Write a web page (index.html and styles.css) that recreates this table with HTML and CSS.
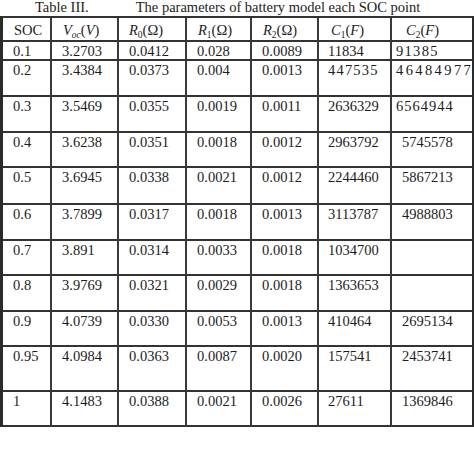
FILE: index.html
```html
<!DOCTYPE html>
<html>
<head>
<meta charset="utf-8">
<link rel="stylesheet" href="styles.css">
</head>
<body>
<div class="title"><span class="t1">Table III.</span><span class="t2">The parameters of battery model each SOC point</span></div>
<div class="tbl">
  <div class="c h c1">SOC</div>
  <div class="c h c2"><i>V</i><sub><i>oc</i></sub>(<i>V</i>)</div>
  <div class="c h c3"><i>R</i><sub>0</sub>(Ω)</div>
  <div class="c h c4"><i>R</i><sub>1</sub>(Ω)</div>
  <div class="c h c5"><i>R</i><sub>2</sub>(Ω)</div>
  <div class="c h c6"><i>C</i><sub>1</sub>(<i>F</i>)</div>
  <div class="c h c7"><i>C</i><sub>2</sub>(<i>F</i>)</div>

  <div class="c c1">0.1</div><div class="c c2">3.2703</div><div class="c c3">0.0412</div><div class="c c4">0.028</div><div class="c c5">0.0089</div><div class="c c6">11834</div><div class="c c7 s1">91385</div>
  <div class="c c1">0.2</div><div class="c c2">3.4384</div><div class="c c3">0.0373</div><div class="c c4">0.004</div><div class="c c5">0.0013</div><div class="c c6 w1">447535</div><div class="c c7 s2">46484977</div>
  <div class="c c1">0.3</div><div class="c c2">3.5469</div><div class="c c3">0.0355</div><div class="c c4">0.0019</div><div class="c c5">0.0011</div><div class="c c6">2636329</div><div class="c c7 s3">6564944</div>
  <div class="c c1">0.4</div><div class="c c2">3.6238</div><div class="c c3">0.0351</div><div class="c c4">0.0018</div><div class="c c5">0.0012</div><div class="c c6">2963792</div><div class="c c7">5745578</div>
  <div class="c c1">0.5</div><div class="c c2">3.6945</div><div class="c c3">0.0338</div><div class="c c4">0.0021</div><div class="c c5">0.0012</div><div class="c c6">2244460</div><div class="c c7">5867213</div>
  <div class="c c1">0.6</div><div class="c c2">3.7899</div><div class="c c3">0.0317</div><div class="c c4">0.0018</div><div class="c c5">0.0013</div><div class="c c6">3113787</div><div class="c c7">4988803</div>
  <div class="c c1">0.7</div><div class="c c2">3.891</div><div class="c c3">0.0314</div><div class="c c4">0.0033</div><div class="c c5">0.0018</div><div class="c c6">1034700</div><div class="c c7"></div>
  <div class="c c1">0.8</div><div class="c c2">3.9769</div><div class="c c3">0.0321</div><div class="c c4">0.0029</div><div class="c c5">0.0018</div><div class="c c6">1363653</div><div class="c c7"></div>
  <div class="c c1">0.9</div><div class="c c2">4.0739</div><div class="c c3">0.0330</div><div class="c c4">0.0053</div><div class="c c5">0.0013</div><div class="c c6">410464</div><div class="c c7">2695134</div>
  <div class="c c1">0.95</div><div class="c c2">4.0984</div><div class="c c3">0.0363</div><div class="c c4">0.0087</div><div class="c c5">0.0020</div><div class="c c6">157541</div><div class="c c7">2453741</div>
  <div class="c c1">1</div><div class="c c2">4.1483</div><div class="c c3">0.0388</div><div class="c c4">0.0021</div><div class="c c5">0.0026</div><div class="c c6">27611</div><div class="c c7">1369846</div>
</div>
</body>
</html>
```
FILE: styles.css
```css
html, body {
  margin: 0;
  padding: 0;
  background: #fff;
}
body {
  font-family: "Liberation Serif", "Times New Roman", serif;
  font-size: 14.5px;
  color: #1c1c1c;
  width: 474px;
  height: 449px;
  overflow: hidden;
}
.title {
  height: 16px;
  line-height: 14px;
  display: flex;
  white-space: nowrap;
}
.t1 { margin-left: 35px; }
.t2 { margin-left: 47px; }

.tbl {
  display: grid;
  box-sizing: border-box;
  width: 474px;
  grid-template-columns: 49px 67px 68px 65px 67px 73px 80px;
  grid-template-rows: 24px 19px 36px 36px 35px 37px 36px 35px 36px 35px 45px 35px;
  border-left: 3px solid #2a2a2a;
  border-right: 2px solid #2a2a2a;
  border-top: 2px solid #333;
}
.c {
  box-sizing: border-box;
  border-right: 2px solid #3a3a3a;
  border-bottom: 2px solid #333;
  line-height: 16px;
  padding-top: 1px;
  padding-left: 10px;
  white-space: nowrap;
  overflow: visible;
}
.c1 { padding-left: 10px; }
.c7 { border-right: none; padding-left: 10px; }
.h { padding-top: 4px; padding-left: 11px; }
.h.c3 { padding-left: 10px; }
.h.c7 { padding-left: 14px; }
.c6 { padding-left: 9px; }
.h.c6 { padding-left: 12px; }
.s1 { padding-left: 4px; letter-spacing: 1.3px; }
.s2 { padding-left: 4px; letter-spacing: 2.4px; }
.s3 { padding-left: 4px; letter-spacing: 1px; }
.w1 { letter-spacing: 1.2px; }
sub {
  font-size: 9.5px;
  line-height: 0;
  vertical-align: -3px;
}
```
